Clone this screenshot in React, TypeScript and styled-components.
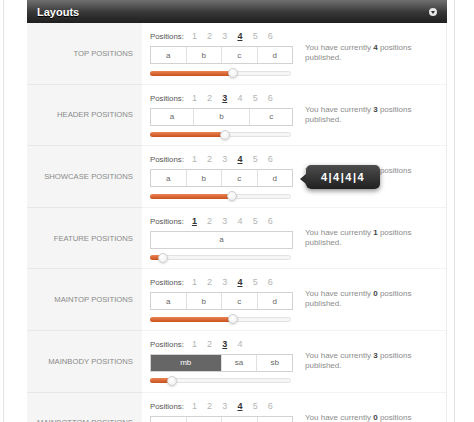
import styled, { createGlobalStyle } from "styled-components";

const GlobalStyle = createGlobalStyle`
  html, body {
    margin: 0;
    padding: 0;
    background: #fff;
    overflow: hidden;
  }
  body {
    font-family: "Liberation Sans", Arial, sans-serif;
  }
`;

const Frame = styled.div`
  margin-left: 3px;
  width: 452px;
  min-height: 430px;
  box-sizing: border-box;
  border-left: 1px solid #e3e3e3;
  border-right: 1px solid #e3e3e3;
  padding: 0 7px 0 23px;
`;

const Panel = styled.div`
  width: 420px;
`;

const Header = styled.div`
  height: 23px;
  display: flex;
  align-items: center;
  justify-content: space-between;
  padding: 0 10px;
  background: linear-gradient(#707070, #363636 55%, #1f1f1f);
`;

const Title = styled.span`
  color: #fff;
  font-size: 11px;
  font-weight: bold;
  text-shadow: 0 1px 0 #000;
`;

const Toggle = styled.span`
  width: 8px;
  height: 8px;
  border-radius: 50%;
  background: #e6e6e6;
  display: flex;
  align-items: center;
  justify-content: center;

  &::after {
    content: "";
    border-style: solid;
    border-width: 3px 2.5px 0 2.5px;
    border-color: #333 transparent transparent transparent;
    margin-top: 1px;
  }
`;

const Body = styled.div`
  border-right: 1px solid #ececec;
`;

const Row = styled.div`
  display: flex;
  height: 61.6px;
`;

const LabelCell = styled.div`
  width: 115px;
  flex: none;
  box-sizing: border-box;
  display: flex;
  align-items: center;
  justify-content: flex-end;
  padding-right: 9px;
  background: #f5f5f5;
  border-bottom: 1px solid #e8e8e8;
  color: #8a8a8a;
  font-size: 7.7px;
  text-transform: uppercase;
`;

const ControlCell = styled.div`
  flex: 1;
  display: flex;
  align-items: flex-start;
  box-sizing: border-box;
  padding: 8px 0 0 8px;
  border-bottom: 1px solid #f3f3f3;
`;

const Controls = styled.div`
  width: 143px;
  flex: none;
  display: flex;
  flex-direction: column;
`;

const PositionsLine = styled.div`
  display: flex;
  align-items: baseline;
  height: 10px;
  line-height: 10px;
  font-size: 7.8px;
  color: #555;
`;

const Numbers = styled.span`
  display: flex;
  margin-left: 3px;
`;

const Num = styled.span<{ $active?: boolean }>`
  width: 15.2px;
  text-align: center;
  font-size: 9px;
  color: ${(p) => (p.$active ? "#333" : "#b4b4b4")};
  font-weight: ${(p) => (p.$active ? "bold" : "normal")};
  text-decoration: ${(p) => (p.$active ? "underline" : "none")};
`;

const Slots = styled.div`
  margin-top: 5px;
  height: 18px;
  display: flex;
  box-sizing: border-box;
  border: 1px solid #d2d2d2;
  background: #fff;
`;

const Slot = styled.div<{ $span: number; $active?: boolean }>`
  flex: ${(p) => p.$span};
  display: flex;
  align-items: center;
  justify-content: center;
  font-size: 8px;
  color: ${(p) => (p.$active ? "#fff" : "#666")};
  background: ${(p) => (p.$active ? "#666" : "transparent")};
  border-right: 1px solid #e0e0e0;

  &:last-child {
    border-right: none;
  }
`;

const Slider = styled.div`
  position: relative;
  margin-top: 4px;
  width: 141px;
  height: 10px;
  display: flex;
  align-items: center;
`;

const Track = styled.div`
  position: relative;
  width: 100%;
  height: 5px;
  box-sizing: border-box;
  border: 1px solid #e2e2e2;
  border-radius: 3px;
  background: #f6f6f6;
`;

const Fill = styled.div`
  position: absolute;
  left: -1px;
  top: -1px;
  bottom: -1px;
  background: linear-gradient(#ea8453, #c9521d);
  border-radius: 3px;
`;

const Thumb = styled.div`
  position: absolute;
  top: 0;
  width: 10px;
  height: 10px;
  box-sizing: border-box;
  border-radius: 50%;
  border: 1px solid #cfcfcf;
  background: radial-gradient(circle at 40% 35%, #fff, #ececec);
  box-shadow: 0 1px 2px rgba(0, 0, 0, 0.15);
  transform: translateX(-50%);
`;

const Description = styled.div`
  position: relative;
  margin: 12px 0 0 12px;
  width: 120px;
  font-size: 8px;
  line-height: 10px;
  color: #8c8c8c;

  b {
    color: #444;
  }
`;

const Tooltip = styled.div`
  position: absolute;
  left: 1px;
  top: -1px;
  width: 74px;
  height: 24px;
  display: flex;
  align-items: center;
  justify-content: center;
  border-radius: 5px;
  background: linear-gradient(#4d4d4d, #202020);
  box-shadow: 0 2px 5px rgba(0, 0, 0, 0.45);
  color: #fff;
  font-size: 11px;
  font-weight: bold;
  letter-spacing: 1.5px;

  &::before {
    content: "";
    position: absolute;
    left: -6px;
    top: 9px;
    border-style: solid;
    border-width: 5px 6px 5px 0;
    border-color: transparent #2f2f2f transparent transparent;
  }
`;

type Cell = { text: string; span: number; active?: boolean };

type LayoutRow = {
  label: string;
  count: number;
  selected: number;
  cells: Cell[];
  published: number;
  thumb: number;
  tooltip?: string;
};

const four: Cell[] = ["a", "b", "c", "d"].map((t) => ({ text: t, span: 1 }));

const rows: LayoutRow[] = [
  { label: "Top Positions", count: 6, selected: 4, cells: four, published: 4, thumb: 0.59 },
  {
    label: "Header Positions",
    count: 6,
    selected: 3,
    cells: [
      { text: "a", span: 3 },
      { text: "b", span: 4 },
      { text: "c", span: 3 },
    ],
    published: 3,
    thumb: 0.53,
  },
  {
    label: "Showcase Positions",
    count: 6,
    selected: 4,
    cells: four,
    published: 4,
    thumb: 0.58,
    tooltip: "4|4|4|4",
  },
  {
    label: "Feature Positions",
    count: 6,
    selected: 1,
    cells: [{ text: "a", span: 1 }],
    published: 1,
    thumb: 0.09,
  },
  { label: "Maintop Positions", count: 6, selected: 4, cells: four, published: 0, thumb: 0.59 },
  {
    label: "Mainbody Positions",
    count: 4,
    selected: 3,
    cells: [
      { text: "mb", span: 6, active: true },
      { text: "sa", span: 3 },
      { text: "sb", span: 3 },
    ],
    published: 3,
    thumb: 0.155,
  },
  { label: "Mainbottom Positions", count: 6, selected: 4, cells: four, published: 0, thumb: 0.59 },
];

function App() {
  return (
    <>
      <GlobalStyle />
      <Frame>
        <Panel>
          <Header>
            <Title>Layouts</Title>
            <Toggle />
          </Header>
          <Body>
            {rows.map((row) => (
              <Row key={row.label}>
                <LabelCell>{row.label}</LabelCell>
                <ControlCell>
                  <Controls>
                    <PositionsLine>
                      Positions:
                      <Numbers>
                        {Array.from({ length: row.count }, (_, i) => (
                          <Num key={i} $active={i + 1 === row.selected}>
                            {i + 1}
                          </Num>
                        ))}
                      </Numbers>
                    </PositionsLine>
                    <Slots>
                      {row.cells.map((cell, i) => (
                        <Slot key={i} $span={cell.span} $active={cell.active}>
                          {cell.text}
                        </Slot>
                      ))}
                    </Slots>
                    <Slider>
                      <Track>
                        <Fill style={{ width: `calc(${row.thumb * 100}% + 1px)` }} />
                      </Track>
                      <Thumb style={{ left: `${row.thumb * 100}%` }} />
                    </Slider>
                  </Controls>
                  <Description>
                    You have currently <b>{row.published}</b> positions published.
                    {row.tooltip && <Tooltip>{row.tooltip}</Tooltip>}
                  </Description>
                </ControlCell>
              </Row>
            ))}
          </Body>
        </Panel>
      </Frame>
    </>
  );
}

export default App;
